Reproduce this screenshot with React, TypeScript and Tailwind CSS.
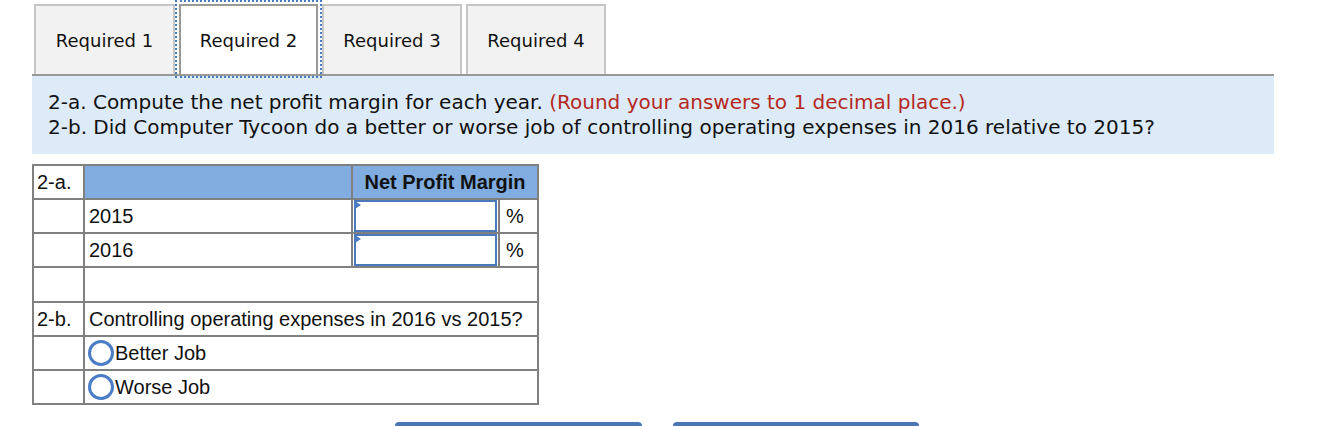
import React from "react";

const tabs = [
  { label: "Required 1", w: "w-[141px]", active: false },
  { label: "Required 2", w: "w-[139px]", active: true },
  { label: "Required 3", w: "w-[140px]", active: false },
  { label: "Required 4", w: "w-[140px]", active: false },
];

const cell = "border-2 border-[#808080] p-0 align-middle";

function InputCell() {
  return (
    <td className={cell + " px-[1px]"}>
      <div className="relative">
        <div className="h-[32px] w-full border-2 border-[#4b78b8] bg-white" />
        <div className="absolute left-[1px] top-[1px] w-0 h-0 border-t-[4px] border-b-[4px] border-l-[6px] border-t-transparent border-b-transparent border-l-[#4b7bc0]" />
      </div>
    </td>
  );
}

function Radio({ label }: { label: string }) {
  return (
    <div className="flex items-center">
      <span className="inline-block w-[26px] h-[26px] rounded-full border-[3px] border-[#4a7dc4] bg-white mr-[1px]" />
      <span>{label}</span>
    </div>
  );
}

export default function App() {
  return (
    <div className="bg-white w-[1338px] h-[426px] overflow-hidden">
      <div className="ml-[32px] w-[1242px]">
        <div
          className="flex gap-[4px] pl-[2px] pt-[4px] border-b-2 border-[#999999]"
          style={{ fontFamily: '"DejaVu Sans", Verdana, sans-serif' }}
        >
          {tabs.map((t) => (
            <div
              key={t.label}
              className={
                t.w +
                " h-[70px] flex items-center justify-center text-[18px] text-[#111] border-2 border-b-0 " +
                (t.active
                  ? "bg-white border-[#999999] relative z-10 outline-2 outline-dotted outline-[#4a7bc0] outline-offset-2"
                  : "bg-[#f2f2f2] border-[#c6c6c6]")
              }
            >
              {t.label}
            </div>
          ))}
        </div>
        <div
          className="bg-[#ddebf8] pt-[14px] pb-[14px] pl-[16px] text-[20px] leading-[25px] text-[#111]"
          style={{ fontFamily: '"DejaVu Sans", Verdana, sans-serif' }}
        >
          <div>
            2-a. Compute the net profit margin for each year.{" "}
            <span className="text-[#b5281f]">(Round your answers to 1 decimal place.)</span>
          </div>
          <div>
            2-b. Did Computer Tycoon do a better or worse job of controlling operating expenses in 2016 relative to 2015?
          </div>
        </div>
        <table
          className="mt-[10px] border-collapse table-fixed w-[505px] text-[20px] leading-none text-[#111]"
          style={{ fontFamily: '"Liberation Sans", Arial, sans-serif' }}
        >
          <colgroup>
            <col className="w-[51px]" />
            <col className="w-[268px]" />
            <col className="w-[147px]" />
            <col className="w-[39px]" />
          </colgroup>
          <tbody>
            <tr className="h-[34px]">
              <td className={cell + " pl-[3px] bg-white"}>2-a.</td>
              <td className={cell + " bg-[#80acdf]"} />
              <td colSpan={2} className={cell + " bg-[#80acdf] font-bold text-center"}>
                Net Profit Margin
              </td>
            </tr>
            {["2015", "2016"].map((y) => (
              <tr key={y} className="h-[34px]">
                <td className={cell} />
                <td className={cell + " px-[4px]"}>{y}</td>
                <InputCell />
                <td className={cell + " pl-[6px]"}>%</td>
              </tr>
            ))}
            <tr className="h-[35px]">
              <td className={cell} />
              <td colSpan={3} className={cell} />
            </tr>
            <tr className="h-[34px]">
              <td className={cell + " pl-[3px]"}>2-b.</td>
              <td colSpan={3} className={cell + " px-[4px]"}>
                Controlling operating expenses in 2016 vs 2015?
              </td>
            </tr>
            {["Better Job", "Worse Job"].map((l) => (
              <tr key={l} className="h-[34px]">
                <td className={cell} />
                <td colSpan={3} className={cell + " pl-[3px]"}>
                  <Radio label={l} />
                </td>
              </tr>
            ))}
          </tbody>
        </table>
        <div className="flex gap-[31px] pl-[363px] mt-[17px]">
          <div className="w-[247px] h-[40px] rounded-[4px] bg-[#4a77b4]" />
          <div className="w-[246px] h-[40px] rounded-[4px] bg-[#4a77b4]" />
        </div>
      </div>
    </div>
  );
}
